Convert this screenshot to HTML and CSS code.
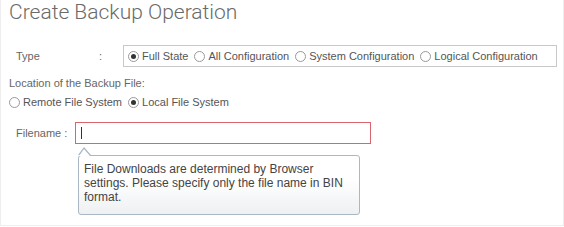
FILE: index.html
```html
<!DOCTYPE html>
<html lang="en">
<head>
	<meta charset="UTF-8">
	<title>Create Backup Operation</title>
	<link rel="stylesheet" href="styles.css">
</head>
<body>
	<div class="panel">
		<h1 class="title">Create Backup Operation</h1>

		<div class="type-row">
			<span class="row-label">Type</span>
			<span class="colon">:</span>
			<div class="radio-group boxed">
				<span class="radio checked"></span><span class="radio-text">Full State</span>
				<span class="radio"></span><span class="radio-text">All Configuration</span>
				<span class="radio"></span><span class="radio-text">System Configuration</span>
				<span class="radio"></span><span class="radio-text">Logical Configuration</span>
			</div>
		</div>

		<div class="section-label">Location of the Backup File:</div>

		<div class="radio-group location">
			<span class="radio"></span><span class="radio-text">Remote File System</span>
			<span class="radio checked"></span><span class="radio-text">Local File System</span>
		</div>

		<div class="file-row">
			<span class="file-label">Filename :</span>
			<div class="field">
				<div class="input"><span class="caret"></span></div>
				<div class="tooltip">
					File Downloads are determined by Browser settings. Please specify only the file name in BIN format.
				</div>
			</div>
		</div>
	</div>
</body>
</html>
```

FILE: styles.css
```css
body {
	margin: 0;
	background: #fff;
	font-family: "Liberation Sans", Arial, sans-serif;
	font-size: 11px;
	color: #666;
}

.panel {
	width: 562px;
	height: 225px;
	border: 1px solid #eee;
	border-top: none;
	overflow: hidden;
}

.title {
	margin: 0;
	padding-left: 8px;
	font-family: Roboto, "Liberation Sans", sans-serif;
	font-weight: 300;
	font-size: 21px;
	line-height: 24px;
	color: #6a6a6a;
}

.type-row {
	display: flex;
	align-items: center;
	margin-top: 21px;
	padding-left: 15px;
}

.row-label {
	width: 83px;
}

.colon {
	width: 24px;
}

.radio-group {
	display: flex;
	align-items: center;
	color: #555;
}

.boxed {
	height: 20px;
	border: 1px solid #c8c8c8;
	padding: 0 12px 0 4px;
}

.radio {
	width: 9px;
	height: 9px;
	border: 1px solid #999;
	border-radius: 50%;
	background: #fff;
	display: flex;
	align-items: center;
	justify-content: center;
}

.radio.checked::after {
	content: "";
	width: 5px;
	height: 5px;
	border-radius: 50%;
	background: #333;
}

.radio-text {
	margin-left: 3px;
	margin-right: 6px;
}

.section-label {
	margin-top: 9px;
	padding-left: 8px;
	line-height: 14px;
}

.location {
	margin-top: 5px;
	padding-left: 8px;
	height: 14px;
}

.file-row {
	display: flex;
	margin-top: 13px;
	padding-left: 15px;
}

.file-label {
	width: 59px;
	line-height: 22px;
}

.field {
	display: flex;
	flex-direction: column;
}

.input {
	width: 289px;
	height: 20px;
	border: 1px solid #d9666f;
	display: flex;
	align-items: center;
	padding-left: 5px;
	box-sizing: content-box;
}

.caret {
	width: 1px;
	height: 12px;
	background: #333;
}

.tooltip {
	position: relative;
	margin: 11px 0 0 3px;
	width: 270px;
	padding: 6px 5px 10px 5px;
	border: 1px solid #a9b8c4;
	border-radius: 3px;
	background: linear-gradient(#fff 40%, #eef0f2);
	font-size: 12px;
	line-height: 14px;
	color: #444;
}

.tooltip::before,
.tooltip::after {
	content: "";
	position: absolute;
	left: -1px;
	border-style: solid;
	border-color: transparent;
}

.tooltip::before {
	top: -9px;
	border-width: 0 7px 8px 6px;
	border-bottom-color: #a9b8c4;
}

.tooltip::after {
	top: -7px;
	left: 0;
	border-width: 0 6px 7px 5px;
	border-bottom-color: #fff;
}
```
